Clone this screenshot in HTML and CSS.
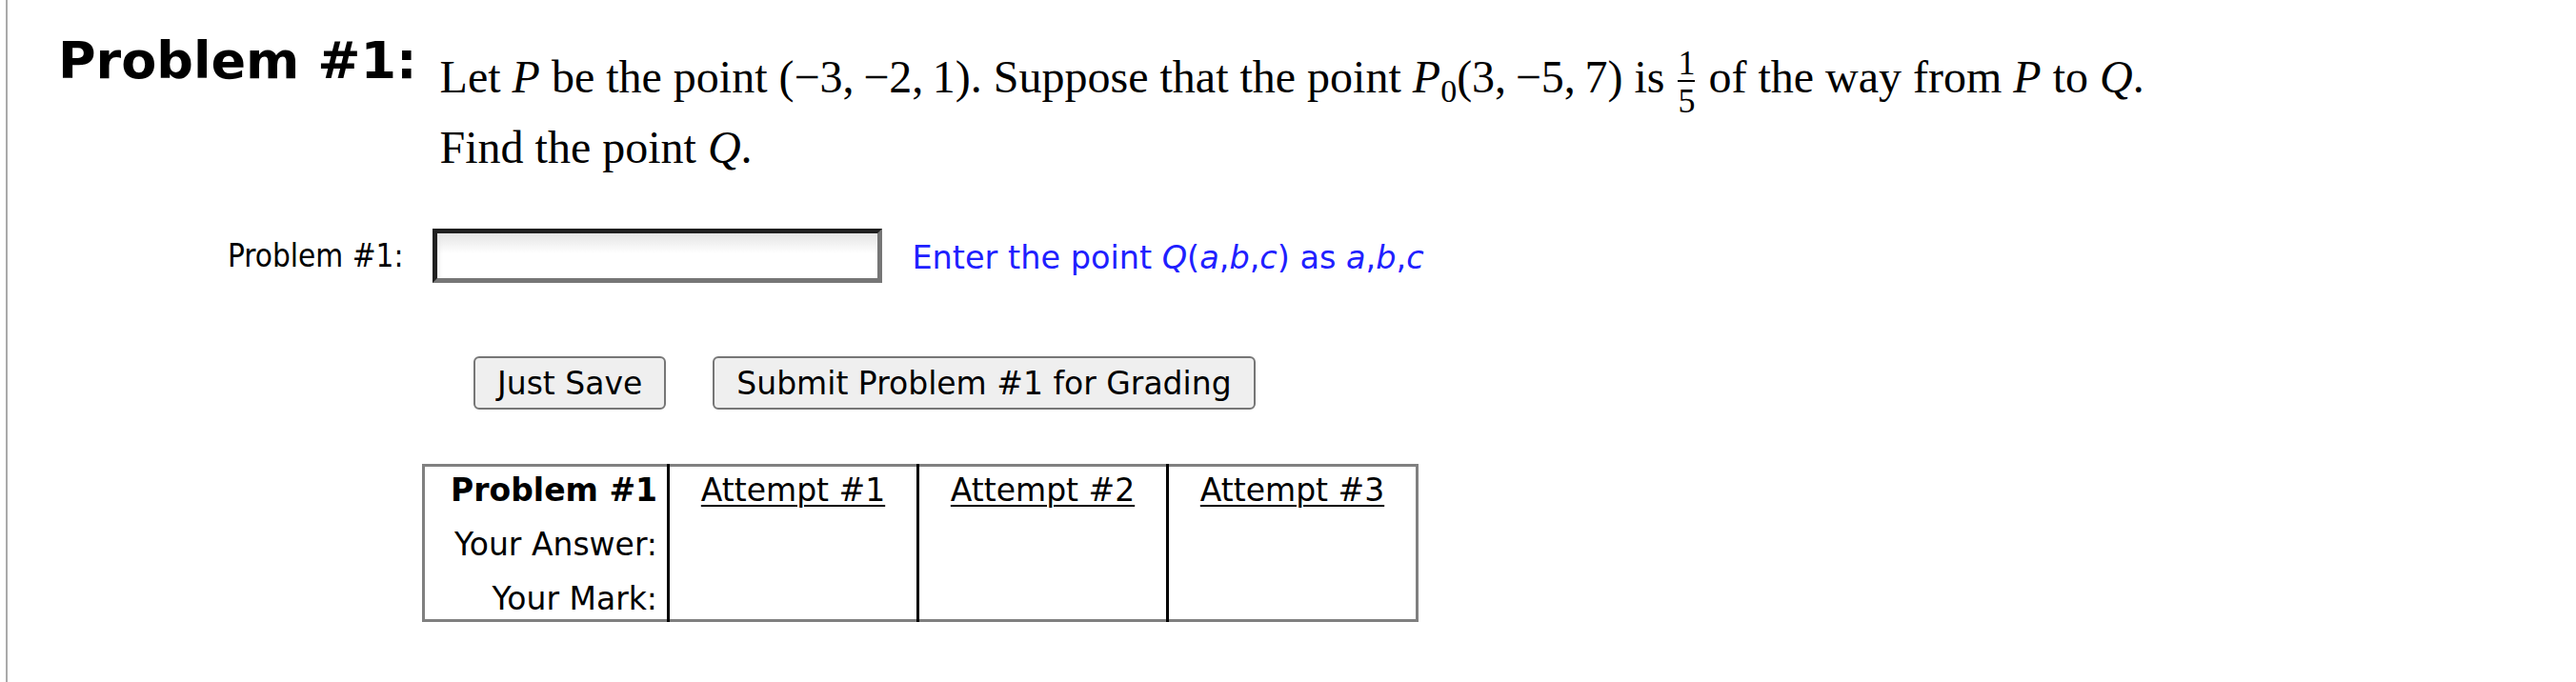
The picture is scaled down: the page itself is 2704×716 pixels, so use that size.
FILE: index.html
```html
<!DOCTYPE html>
<html lang="en">
<head>
    <meta charset="UTF-8">
    <title>Problem #1</title>
    <link rel="stylesheet" href="styles.css">
</head>
<body>
    <div class="page">
        <div class="problem-head">
            <h2>Problem #1:</h2>
            <div class="problem-text">
                Let <i>P</i> be the point (−3,&thinsp;−2,&thinsp;1). Suppose that the point <i>P</i><sub>0</sub>(3,&thinsp;−5,&thinsp;7) is <span class="frac"><span class="num">1</span><span class="den">5</span></span> of the way from <i>P</i> to <i>Q</i>.<br>
                Find the point <i>Q</i>.
            </div>
        </div>

        <div class="answer-row">
            <label for="answer1">Problem #1:</label>
            <input type="text" id="answer1" name="answer1">
            <span class="hint">Enter the point <i>Q</i>(<i>a</i>,<i>b</i>,<i>c</i>) as <i>a</i>,<i>b</i>,<i>c</i></span>
        </div>

        <div class="buttons">
            <button type="button">Just Save</button>
            <button type="button">Submit Problem #1 for Grading</button>
        </div>

        <table class="attempts">
            <colgroup>
                <col class="col-label">
                <col class="col-attempt">
                <col class="col-attempt">
                <col class="col-attempt">
            </colgroup>
            <tr>
                <th>Problem #1</th>
                <td><u>Attempt #1</u></td>
                <td><u>Attempt #2</u></td>
                <td><u>Attempt #3</u></td>
            </tr>
            <tr>
                <td class="row-label">Your Answer:</td>
                <td></td>
                <td></td>
                <td></td>
            </tr>
            <tr class="last">
                <td class="row-label">Your Mark:</td>
                <td></td>
                <td></td>
                <td></td>
            </tr>
        </table>
    </div>
</body>
</html>
```

FILE: styles.css
```css
body {
    margin: 0;
    background: white;
    font-family: "DejaVu Sans", Verdana, sans-serif;
    color: #000;
}
.page {
    margin-left: 6px;
    min-height: 100vh;
    border-left: 2px solid #aaa;
    padding-left: 53px;
}
.problem-head {
    display: flex;
    align-items: flex-start;
    padding-top: 29px;
}
.problem-head h2 {
    margin: 0 24px 0 0;
    font-size: 54px;
    line-height: 70px;
    font-weight: bold;
    white-space: nowrap;
}
.problem-text {
    margin-top: 15px;
    font-family: "Liberation Serif", "Times New Roman", serif;
    font-size: 48px;
    line-height: 73px;
    white-space: nowrap;
}
.problem-text sub {
    font-size: 34px;
    vertical-align: -10px;
    line-height: 0;
}
.frac {
    display: inline-block;
    vertical-align: -21px;
    text-align: center;
    font-size: 36px;
    padding: 0 2px;
}
.frac .num {
    display: block;
    line-height: 30px;
    padding-bottom: 3px;
}
.frac .den {
    display: block;
    line-height: 24px;
    padding-top: 8px;
    border-top: 2px solid #000;
}
.answer-row {
    display: flex;
    align-items: center;
    margin-top: 49px;
    padding-left: 178px;
}
.answer-row label {
    font-family: "DejaVu Sans Condensed", "DejaVu Sans", sans-serif;
    font-stretch: condensed;
    font-size: 33px;
    margin-right: 31px;
}
.answer-row input {
    box-sizing: border-box;
    width: 472px;
    height: 57px;
    border: 5px solid;
    border-color: #1f1f1f #767676 #767676 #1f1f1f;
    background: linear-gradient(#e4e4e4, #fff 45%);
    box-shadow: inset 4px 0 5px -3px #ddd;
    font-size: 33px;
    padding: 0 6px;
}
.hint {
    margin-left: 31px;
    font-size: 33.5px;
    color: #2020ff;
    padding-top: 3px;
}
.buttons {
    display: flex;
    gap: 49px;
    margin-top: 77px;
    padding-left: 436px;
}
.buttons button {
    height: 56px;
    padding: 0 23px;
    font-family: "DejaVu Sans", Verdana, sans-serif;
    font-size: 33px;
    color: #000;
    background: #efefef;
    border: 2.5px solid #767676;
    border-radius: 6px;
}
.attempts {
    margin: 57px 0 0 382px;
    border-collapse: collapse;
    table-layout: fixed;
    border: 3px solid #808080;
    font-size: 33px;
}
.col-label {
    width: 257px;
}
.col-attempt {
    width: 262px;
}
.attempts th,
.attempts td {
    padding: 5px 10px 12px;
    line-height: 40px;
    text-align: center;
    white-space: nowrap;
}
.attempts th,
.attempts .row-label {
    text-align: right;
}
.attempts td + td,
.attempts th + td {
    border-left: 3px solid #000;
}
.attempts .last td {
    padding-bottom: 1px;
}
.attempts u {
    text-decoration-thickness: 2px;
    text-underline-offset: 4px;
}
```
